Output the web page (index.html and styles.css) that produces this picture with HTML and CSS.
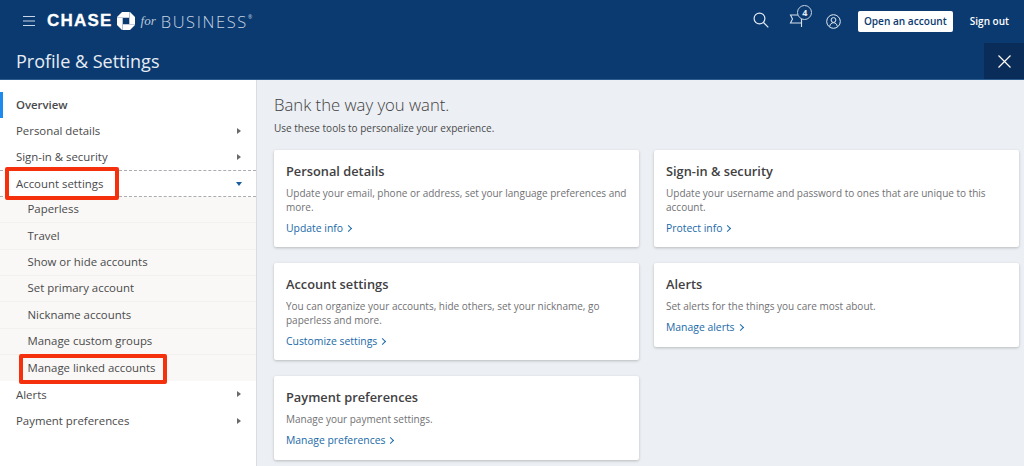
FILE: index.html
```html
<!DOCTYPE html>
<html lang="en">
  <head>
    <meta charset="UTF-8" />
    <title>Profile &amp; Settings</title>
    <link rel="stylesheet" href="styles.css">
  </head>
  <body>
    <header class="topbar">
      <svg class="menu-icon" width="12" height="10" viewBox="0 0 12 10" fill="none" stroke="#c9d6e6" stroke-width="1"><path d="M0 .5h12M0 5h12M0 9.500h12"/></svg>
      <div class="logo">
        <span class="logo-chase">CHASE</span>
        <svg class="logo-mark" width="18" height="18" viewBox="0 0 18 18" fill="#fff">
          <polygon points="5,0 12,0 12,5.700 0,5.700 0,5"/>
          <polygon points="18,5 18,12 12.300,12 12.300,0 13,0"/>
          <polygon points="13,18 6,18 6,12.300 18,12.300 18,13"/>
          <polygon points="0,13 0,6 5.700,6 5.700,18 5,18"/>
        </svg>
        <span class="logo-for">for</span>
        <span class="logo-business">BUSINESS</span>
        <span class="logo-reg">®</span>
      </div>
      <div class="topbar-right">
        <svg class="search-icon" width="16" height="16" viewBox="0 0 16 16" fill="none" stroke="#e4ebf3" stroke-width="1.200"><circle cx="6.500" cy="6.500" r="5.400"/><path d="M10.500 10.500l4.800 4.800"/></svg>
        <div class="flag">
          <svg width="24" height="24" viewBox="0 0 24 24" fill="none" stroke="#d5dfeb" stroke-width="1.100"><path d="M1.500 5H12.500V13H1.500L3.500 9z"/><path d="M12.500 3v14"/></svg>
          <span class="flag-badge">4</span>
        </div>
        <svg class="user-icon" width="15" height="15" viewBox="0 0 15 15" fill="none" stroke="#e4ebf3" stroke-width="1"><circle cx="7.500" cy="7.500" r="6.800"/><circle cx="7.500" cy="6" r="2.400"/><path d="M3.800 12.500c0-5 7.400-5 7.400 0"/></svg>
        <a class="open-btn">Open an account</a>
        <a class="sign-out">Sign out</a>
      </div>
    </header>

    <div class="titlebar">
      <h1>Profile &amp; Settings</h1>
      <div class="close-box">
        <svg width="13" height="13" viewBox="0 0 13 13" fill="none" stroke="#fff" stroke-width="1.200"><path d="M.5.500l12 12M12.500.500l-12 12"/></svg>
      </div>
    </div>

    <div class="layout">
      <nav class="sidebar">
        <a class="nav-item active">Overview</a>
        <a class="nav-item">Personal details<span class="arrow"></span></a>
        <a class="nav-item">Sign-in &amp; security<span class="arrow"></span></a>
        <a class="nav-item open">Account settings<span class="arrow-down"></span></a>
        <div class="subnav">
          <a class="sub-item">Paperless</a>
          <a class="sub-item">Travel</a>
          <a class="sub-item">Show or hide accounts</a>
          <a class="sub-item">Set primary account</a>
          <a class="sub-item">Nickname accounts</a>
          <a class="sub-item">Manage custom groups</a>
          <a class="sub-item">Manage linked accounts</a>
        </div>
        <a class="nav-item">Alerts<span class="arrow"></span></a>
        <a class="nav-item">Payment preferences<span class="arrow"></span></a>
        <div class="callout callout-account"></div>
        <div class="callout callout-linked"></div>
      </nav>

      <main class="content">
        <h2>Bank the way you want.</h2>
        <p class="lead">Use these tools to personalize your experience.</p>
        <div class="columns">
          <div class="column">
            <section class="card h97">
              <h3>Personal details</h3>
              <p>Update your email, phone or address, set your language preferences and more.</p>
              <a class="card-link">Update info<span class="chev"></span></a>
            </section>
            <section class="card h97">
              <h3>Account settings</h3>
              <p>You can organize your accounts, hide others, set your nickname, go paperless and more.</p>
              <a class="card-link">Customize settings<span class="chev"></span></a>
            </section>
            <section class="card">
              <h3>Payment preferences</h3>
              <p>Manage your payment settings.</p>
              <a class="card-link">Manage preferences<span class="chev"></span></a>
            </section>
          </div>
          <div class="column">
            <section class="card h97">
              <h3>Sign-in &amp; security</h3>
              <p>Update your username and password to ones that are unique to this account.</p>
              <a class="card-link">Protect info<span class="chev"></span></a>
            </section>
            <section class="card">
              <h3>Alerts</h3>
              <p>Set alerts for the things you care most about.</p>
              <a class="card-link">Manage alerts<span class="chev"></span></a>
            </section>
          </div>
        </div>
      </main>
    </div>
  </body>
</html>
```

FILE: styles.css
```css
* {
  box-sizing: border-box;
}
html,
body {
  height: 466px;
  overflow: hidden;
}
body {
  margin: 0;
  font-family: "Open Sans", Arial, sans-serif;
  color: #414042;
  background-color: #eceff3;
}
.topbar {
  height: 42px;
  background-color: #0b3a70;
  display: flex;
  align-items: center;
  padding-left: 23px;
}
.menu-icon {
  margin-right: 12px;
}
.logo {
  display: flex;
  align-items: center;
  color: #fff;
}
.logo-chase {
  font-family: "Liberation Sans", Arial, sans-serif;
  font-weight: 700;
  font-size: 17px;
  letter-spacing: 1.200px;
  -webkit-text-stroke: 0.3px #fff;
}
.logo-mark {
  margin-left: 4px;
  width: 18px;
  height: 18px;
}
.logo-for {
  font-family: "Liberation Serif", serif;
  font-style: italic;
  font-size: 13px;
  margin-left: 6px;
  color: #b9c8dc;
}
.logo-business {
  font-family: "Open Sans", Arial, sans-serif;
  font-weight: 300;
  font-size: 16.500px;
  letter-spacing: 1.600px;
  margin-left: 5px;
  color: #c6d3e4;
}
.logo-reg {
  font-size: 5px;
  margin-bottom: 9px;
  color: #c6d3e4;
}
.topbar-right {
  margin-left: auto;
  display: flex;
  align-items: center;
  padding-right: 15px;
}
.search-icon {
  margin-bottom: 2px;
}
.flag {
  position: relative;
  width: 24px;
  height: 24px;
  margin-left: 20.500px;
  margin-top: 2px;
}
.flag-badge {
  position: absolute;
  top: -5px;
  right: 1px;
  width: 15px;
  height: 15px;
  border: 1px solid #c6d3e4;
  border-radius: 50%;
  background-color: #0b3a70;
  color: #e4ebf3;
  font-size: 9px;
  font-weight: 700;
  line-height: 13px;
  text-align: center;
}
.user-icon {
  margin-left: 12.500px;
}
.open-btn {
  margin-left: 17px;
  background-color: #fff;
  color: #0b3a70;
  font-size: 10.100px;
  font-weight: 600;
  height: 21px;
  line-height: 20px;
  width: 95px;
  text-align: center;
  border-radius: 2px;
}
.sign-out {
  margin-left: 17px;
  margin-bottom: 1px;
  color: #fff;
  font-size: 10px;
  font-weight: 600;
}
.titlebar {
  height: 38px;
  background-color: #0b3a70;
  border-bottom: 1px solid #2d5c8f;
  display: flex;
  align-items: stretch;
  justify-content: space-between;
}
.titlebar h1 {
  margin: 0;
  padding-left: 16px;
  font-size: 18px;
  font-weight: 400;
  line-height: 38px;
  color: #e6ecf4;
}
.close-box {
  width: 40px;
  margin-top: 1px;
  background-color: #0a2c58;
  display: flex;
  align-items: center;
  justify-content: center;
}
.layout {
  display: flex;
  height: 386px;
}
.sidebar {
  position: relative;
  width: 257px;
  flex-shrink: 0;
  padding-top: 11px;
  background-color: #fff;
  border-right: 1px solid #d9dde2;
}
.nav-item,
.sub-item {
  display: flex;
  align-items: center;
  justify-content: space-between;
  font-size: 11.400px;
  color: #4a4a4c;
}
.nav-item {
  height: 26.400px;
  padding: 0 15px 0 16px;
}
.nav-item.active {
  position: relative;
  font-weight: 600;
}
.nav-item.active::before {
  content: "";
  position: absolute;
  left: 0;
  top: 1px;
  width: 3px;
  height: 26px;
  background-color: #1c8bed;
}
.nav-item.open {
  border-top: 1px dashed #a9adb2;
  border-bottom: 1px dashed #a9adb2;
  height: 27px;
}
.subnav {
  background-color: #f9f8f6;
}
.sub-item {
  height: 26.300px;
  padding-left: 27.500px;
  padding-bottom: 2px;
  border-bottom: 1px solid #f2f1ee;
}
.sub-item:last-child {
  border-bottom: none;
}
.arrow {
  width: 0;
  height: 0;
  border-left: 4px solid #6a6a6c;
  border-top: 3px solid transparent;
  border-bottom: 3px solid transparent;
}
.arrow-down {
  width: 0;
  height: 0;
  margin-right: -1px;
  border-top: 4px solid #1a5d9e;
  border-left: 3.500px solid transparent;
  border-right: 3.500px solid transparent;
}
.callout {
  position: absolute;
  border: 4px solid #f5300d;
  border-radius: 2px;
}
.callout-account {
  left: 5px;
  top: 87px;
  width: 114px;
  height: 33px;
}
.callout-linked {
  left: 19px;
  top: 274px;
  width: 148px;
  height: 30px;
}
.content {
  flex: 1;
  padding: 12px 5px 0 17px;
}
.content h2 {
  margin: 0;
  font-size: 16.700px;
  font-weight: 300;
  line-height: 26px;
  color: #414042;
}
.lead {
  margin: 1px 0 0;
  font-size: 10px;
  line-height: 18px;
  color: #4a4a4c;
}
.columns {
  display: grid;
  grid-template-columns: 365px 365px;
  gap: 15px;
  margin-top: 13px;
}
.column {
  display: flex;
  flex-direction: column;
  gap: 16px;
}
.card {
  background-color: #fff;
  border-radius: 2px;
  box-shadow: 0 1px 3px rgba(0, 0, 0, 0.22);
  padding: 11px 12px 11px;
}
.card.h97 {
  height: 97px;
}
.card h3 {
  margin: 0;
  font-size: 12.800px;
  font-weight: 600;
  line-height: 20px;
  color: #414042;
}
.card p {
  margin: 5px 0 0;
  font-size: 10px;
  line-height: 14px;
  color: #717174;
}
.card-link {
  display: inline-block;
  margin-top: 7px;
  font-size: 10.400px;
  line-height: 14px;
  color: #1a6aa8;
}
.chev {
  display: inline-block;
  width: 5px;
  height: 5px;
  margin-left: 3px;
  border-top: 1px solid #1a6aa8;
  border-right: 1px solid #1a6aa8;
  transform: rotate(45deg);
  vertical-align: 1px;
}
```
